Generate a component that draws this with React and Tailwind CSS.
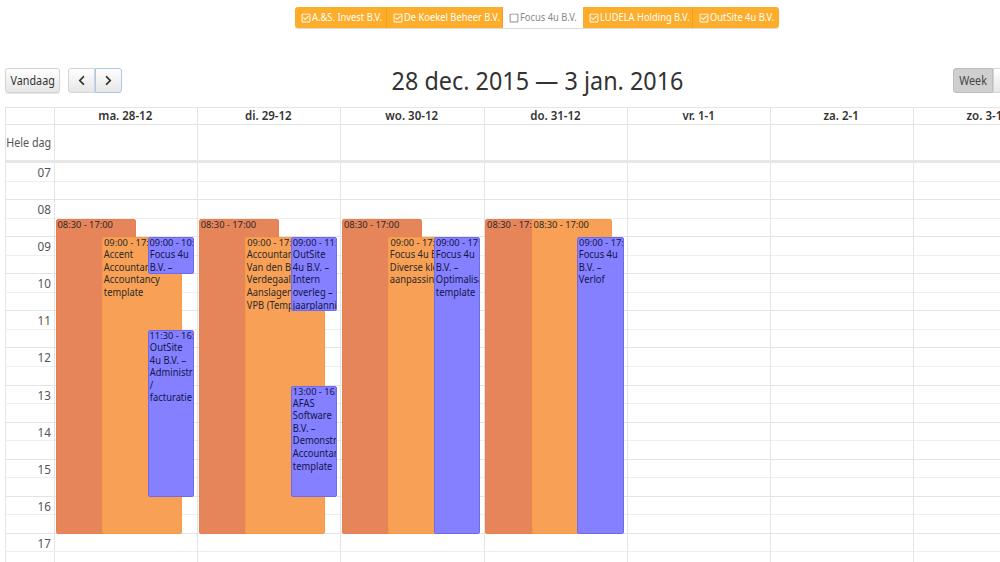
import React from "react";
import { FaChevronLeft, FaChevronRight, FaRegCheckSquare, FaRegSquare } from "react-icons/fa";

const COMPANIES = [
  { name: "A.&S. Invest B.V.", width: "w-[92px]", on: true },
  { name: "De Koekel Beheer B.V.", width: "w-[116px]", on: true },
  { name: "Focus 4u B.V.", width: "w-[80px]", on: false },
  { name: "LUDELA Holding B.V.", width: "w-[110px]", on: true },
  { name: "OutSite 4u B.V.", width: "w-[86px]", on: true },
];

const DAYS = [
  {
    label: "ma. 28-12",
    events: [
      { color: "red", left: 0.5, width: 80, start: 8.5, end: 17, time: "08:30 - 17:00" },
      { color: "orange", left: 47, width: 80, start: 9, end: 17, time: "09:00 - 17:00", title: "Accent Accountancy – Accountancy template" },
      { color: "blue", left: 92.5, width: 46.5, start: 9, end: 10, time: "09:00 - 10:00", title: "Focus 4u B.V. –" },
      { color: "blue", left: 92.5, width: 46.5, start: 11.5, end: 16, time: "11:30 - 16:00", title: "OutSite 4u B.V. – Administratie / facturatie" },
    ],
  },
  {
    label: "di. 29-12",
    events: [
      { color: "red", left: 0.5, width: 80, start: 8.5, end: 17, time: "08:30 - 17:00" },
      { color: "orange", left: 47, width: 80, start: 9, end: 17, time: "09:00 - 17:00", title: "Accountancy – Van den Berg Verdegaal Aanslagen VPB\u00a0(Template)" },
      { color: "blue", left: 92.5, width: 46.5, start: 9, end: 11, time: "09:00 - 11:00", title: "OutSite 4u B.V. – Intern overleg – jaarplanning" },
      { color: "blue", left: 92.5, width: 46.5, start: 13, end: 16, time: "13:00 - 16:00", title: "AFAS Software B.V. – Demonstratie Accountancy template" },
    ],
  },
  {
    label: "wo. 30-12",
    events: [
      { color: "red", left: 0.5, width: 80, start: 8.5, end: 17, time: "08:30 - 17:00" },
      { color: "orange", left: 47, width: 80, start: 9, end: 17, time: "09:00 - 17:00", title: "Focus 4u B.V. – Diverse kleine aanpassingen" },
      { color: "blue", left: 92.5, width: 46.5, start: 9, end: 17, time: "09:00 - 17:00", title: "Focus 4u B.V. – Optimalisatie template" },
    ],
  },
  {
    label: "do. 31-12",
    events: [
      { color: "red", left: 0.5, width: 80, start: 8.5, end: 17, time: "08:30 - 17:00" },
      { color: "orange", left: 47, width: 80, start: 8.5, end: 17, time: "08:30 - 17:00" },
      { color: "blue", left: 92.5, width: 46.5, start: 9, end: 17, time: "09:00 - 17:00", title: "Focus 4u B.V. – Verlof" },
    ],
  },
  { label: "vr. 1-1", events: [] },
  { label: "za. 2-1", events: [] },
  { label: "zo. 3-1", events: [] },
];

const EVENT_COLORS = {
  red: "bg-[#e6845a] border-[#ea7e4e] text-[#2a2a2a]",
  orange: "bg-[#f8a055] border-[#fb9a45] text-[#2a2a2a]",
  blue: "bg-[#8480ff] border-[#6f6be8] text-[#15154a]",
};

const HOURS = ["07", "08", "09", "10", "11", "12", "13", "14", "15", "16", "17"];
const HOUR_HEIGHT = 37.1;

const fontClass = "font-['Noto_Sans','Open_Sans',sans-serif]";

function Slots({ labels }) {
  return HOURS.map((hour) => (
    <div key={hour}>
      <div className="h-[18.55px] border-b border-[#efefef] pr-[3px] text-right text-[13px] leading-[18px] text-[#555]">
        {labels ? <span className="inline-block origin-right scale-x-[0.9]">{hour}</span> : ""}
      </div>
      <div className="h-[18.55px] border-b border-[#e4e4e4]" />
    </div>
  ));
}

function CalEvent({ event }) {
  return (
    <div
      className={`absolute overflow-hidden rounded-[2px] border ${EVENT_COLORS[event.color]}`}
      style={{
        left: event.left,
        width: event.width,
        top: (event.start - 7) * HOUR_HEIGHT,
        height: (event.end - event.start) * HOUR_HEIGHT,
      }}
    >
      <div className="h-[10px] overflow-hidden whitespace-nowrap pl-[1px] text-[9.3px] leading-[9px]">{event.time}</div>
      {event.title && <div className="w-[118%] origin-left scale-x-[0.85] pl-[1px] text-[11px] leading-[12.6px]">{event.title}</div>}
    </div>
  );
}

export default function App() {
  return (
    <div className={`h-[562px] w-[1000px] overflow-hidden bg-white ${fontClass}`}>
      <div className="w-[1057px] pl-[4.5px]">
        <div className="flex h-[68px] items-start justify-start pl-[290.5px] pt-[7px]">
          <div className="flex h-[21px] overflow-hidden rounded-[3px] shadow-[0_1px_1px_rgba(0,0,0,0.15)]">
            {COMPANIES.map((company) => (
              <div
                key={company.name}
                className={`flex items-center gap-[1px] whitespace-nowrap pl-[6px] text-[11px] ${company.width} ${
                  company.on ? "border-r border-[#f0a020] bg-[#fdad2a] text-white last:border-r-0" : "bg-white text-[#888]"
                }`}
              >
                {company.on ? <FaRegCheckSquare size={10} className="shrink-0" /> : <FaRegSquare size={10} className="shrink-0" />}
                <span className="origin-left scale-x-[0.85]">{company.name}</span>
              </div>
            ))}
          </div>
        </div>

        <div className="flex h-[39px] items-start">
          <div className="flex w-[117.5px] gap-[8px]">
            <button className="h-[25px] w-[55.5px] rounded-[3px] border border-[#d4d4d4] bg-gradient-to-b from-white to-[#e6e6e6] text-[12.5px] leading-[20px] text-[#333] shadow-[0_1px_1px_rgba(0,0,0,0.1)]">
              <span className="inline-block scale-x-[0.86]">Vandaag</span>
            </button>
            <div className="flex">
              <button className="flex h-[25px] w-[27px] items-center justify-center rounded-l-[3px] border border-[#d4d4d4] bg-gradient-to-b from-white to-[#e6e6e6] text-[#333]">
                <FaChevronLeft size={11} />
              </button>
              <button className="flex h-[25px] w-[27px] items-center justify-center rounded-r-[3px] border border-[#a9c8f2] bg-gradient-to-b from-white to-[#e6e6e6] text-[#333]">
                <FaChevronRight size={11} />
              </button>
            </div>
          </div>
          <h2 className="flex-1 scale-x-[0.935] text-center text-[25px] leading-[25px] text-[#333]">28 dec. 2015 — 3 jan. 2016</h2>
          <div className="flex w-[104px] text-[12.5px] leading-[20px]">
            <button className="h-[25px] w-[40px] rounded-l-[3px] border border-[#bdbdbd] bg-[#cfcfcf] text-[#444]">
              <span className="inline-block scale-x-[0.86]">Week</span>
            </button>
            <button className="h-[25px] flex-1 rounded-r-[3px] border border-[#d4d4d4] bg-gradient-to-b from-white to-[#e6e6e6] text-[#333]">
              <span className="inline-block scale-x-[0.86]">Dag</span>
            </button>
          </div>
        </div>

        <div className="border-l border-t border-[#e4e4e4]">
          <div className="grid h-[16.5px] grid-cols-[48.5px_repeat(7,143.2px)] border-b border-[#e4e4e4]">
            <div />
            {DAYS.map((day) => (
              <div key={day.label} className="whitespace-nowrap border-l border-[#e4e4e4] pr-[1px] text-center text-[12.5px] font-semibold leading-[15px] text-[#333]">
                <span className="inline-block scale-x-[0.92]">{day.label}</span>
              </div>
            ))}
          </div>
          <div className="grid h-[38.5px] grid-cols-[48.5px_repeat(7,143.2px)] border-b-[3px] border-[#e6e6e6]">
            <div className="flex justify-end whitespace-nowrap pr-[3px] text-[12.5px] leading-[35px] text-[#555]">
              <span className="shrink-0 origin-right scale-x-[0.86]">Hele dag</span>
            </div>
            {DAYS.map((day) => (
              <div key={day.label} className="border-l border-[#e4e4e4]" />
            ))}
          </div>
          <div className="grid grid-cols-[48.5px_repeat(7,143.2px)]">
            <div>
              <Slots labels />
            </div>
            {DAYS.map((day) => (
              <div key={day.label} className="relative border-l border-[#e4e4e4]">
                <Slots />
                {day.events.map((event) => (
                  <CalEvent key={event.color + event.start} event={event} />
                ))}
              </div>
            ))}
          </div>
        </div>
      </div>
    </div>
  );
}
